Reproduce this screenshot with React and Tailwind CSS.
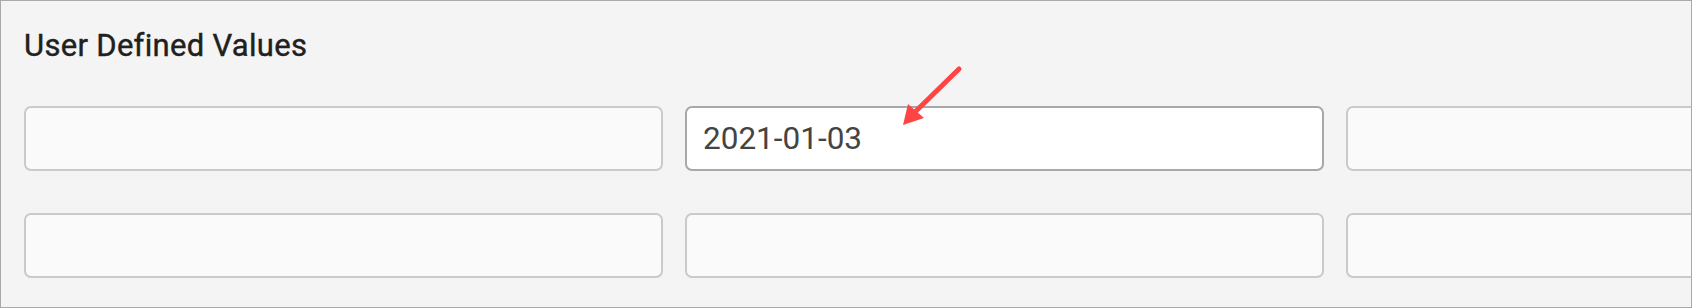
const FIELDS = [
  [{ value: '' }, { value: '2021-01-03', focused: true }, { value: '' }],
  [{ value: '' }, { value: '' }, { value: '' }],
]

export default function App() {
  return (
    <div className="relative w-[1692px] h-[308px] overflow-hidden bg-[#f4f4f4] border border-[#a9a9a9] font-['Roboto',sans-serif] pl-[23px] pt-[27px]">
      <h2 className="text-[31px] leading-[36px] font-normal text-[#202020] tracking-[0.3px] [-webkit-text-stroke:0.4px_#202020]">
        User Defined Values
      </h2>

      <div className="mt-[42px] flex flex-col gap-[42px]">
        {FIELDS.map((row, i) => (
          <div key={i} className="flex gap-[22px]">
            {row.map((field, j) => (
              <div
                key={j}
                className={
                  field.focused
                    ? 'shrink-0 w-[639px] h-[65px] rounded-[7px] border-2 border-[#a8a8a8] bg-white flex items-center px-[16px] text-[31.5px] text-[#444]'
                    : 'shrink-0 w-[639px] h-[65px] rounded-[7px] border-2 border-[#cacaca] bg-[#fafafa] flex items-center px-[16px] text-[31.5px] text-[#444]'
                }
              >
                {field.value}
              </div>
            ))}
          </div>
        ))}
      </div>

      {/* red callout arrow */}
      <svg
        className="absolute left-[895px] top-[60px]"
        width="72"
        height="72"
        viewBox="0 0 72 72"
      >
        <line x1="63" y1="8" x2="17" y2="53" stroke="#ff4444" strokeWidth="5" strokeLinecap="round" />
        <polygon points="7,64 12,43 28,57" fill="#ff4444" />
      </svg>
    </div>
  )
}
